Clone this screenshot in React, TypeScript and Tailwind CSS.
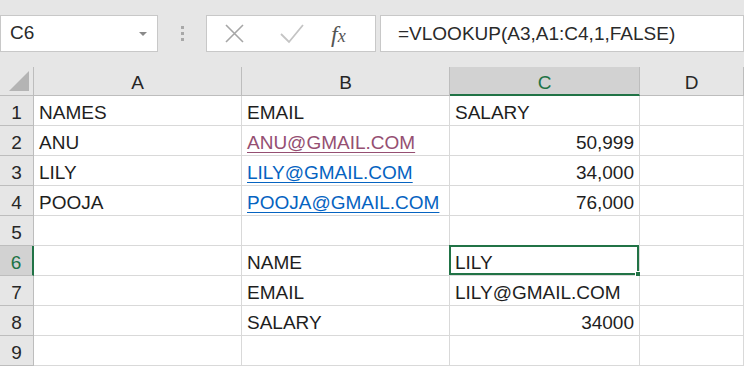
import React from "react";

const font = { fontFamily: '"Liberation Sans", Arial, sans-serif' };

const cols = ["A", "B", "C", "D"];

type Cell = { text?: string; align?: "left" | "right"; color?: string; underline?: boolean };

const rows: Cell[][] = [
  [{ text: "NAMES" }, { text: "EMAIL" }, { text: "SALARY" }, {}],
  [{ text: "ANU" }, { text: "ANU@GMAIL.COM", color: "text-[#954f72]", underline: true }, { text: "50,999", align: "right" }, {}],
  [{ text: "LILY" }, { text: "LILY@GMAIL.COM", color: "text-[#0563c1]", underline: true }, { text: "34,000", align: "right" }, {}],
  [{ text: "POOJA" }, { text: "POOJA@GMAIL.COM", color: "text-[#0563c1]", underline: true }, { text: "76,000", align: "right" }, {}],
  [{}, {}, {}, {}],
  [{}, { text: "NAME" }, { text: "LILY" }, {}],
  [{}, { text: "EMAIL" }, { text: "LILY@GMAIL.COM" }, {}],
  [{}, { text: "SALARY" }, { text: "34000", align: "right" }, {}],
  [{}, {}, {}, {}],
];

export default function App() {
  return (
    <div className="w-[744px] h-[371px] overflow-hidden bg-white text-[#1e1e1e]" style={font}>
      {/* formula bar */}
      <div className="h-[67px] bg-[#e6e6e6] flex items-start pt-[15px]">
        <div className="w-[158px] h-[37px] bg-white border border-[#c8c8c8] flex items-center justify-between pl-[9px] pr-[10px]">
          <span className="text-[19px] text-[#2a2a2a]">C6</span>
          <span className="w-0 h-0 border-l-[4px] border-r-[4px] border-t-[4px] border-l-transparent border-r-transparent border-t-[#8a8a8a]" />
        </div>
        <div className="w-[48px] h-[37px] flex flex-col items-center justify-center gap-[3px]">
          <span className="w-[3px] h-[3px] bg-[#a8a8a8]" />
          <span className="w-[3px] h-[3px] bg-[#a8a8a8]" />
          <span className="w-[3px] h-[3px] bg-[#a8a8a8]" />
        </div>
        <div className="w-[170px] h-[37px] bg-white border border-[#c8c8c8] flex items-center">
          <svg width="60" height="37" viewBox="0 0 60 37">
            <path d="M19 10 L36 27 M36 10 L19 27" stroke="#a6a6a6" strokeWidth="1.6" fill="none" />
          </svg>
          <svg width="52" height="37" viewBox="0 0 52 37">
            <path d="M14 19 L22 27 L36 10" stroke="#c4c4c4" strokeWidth="1.8" fill="none" />
          </svg>
          <span className="ml-[12px] text-[24px] italic text-[#555] leading-none" style={{ fontFamily: '"Liberation Serif", serif' }}>
            f<span className="text-[18px]">x</span>
          </span>
        </div>
        <div className="ml-[4px] flex-1 h-[37px] bg-white border border-[#c8c8c8] flex items-center pl-[17px] pt-[1px]">
          <span className="text-[19px] text-[#2a2a2a]">=VLOOKUP(A3,A1:C4,1,FALSE)</span>
        </div>
      </div>

      {/* grid */}
      <div className="grid grid-cols-[34px_208px_208px_190px_1fr] auto-rows-[30px] grid-rows-[29px]">
        <div className="bg-[#e6e6e6] border-r border-b border-[#bdbdbd] relative">
          <span className="absolute right-[4px] bottom-[4px] w-0 h-0" style={{ borderBottom: "20px solid #b4b4b4", borderLeft: "20px solid transparent" }} />
        </div>
        {cols.map((c) => (
          <div
            key={c}
            className={
              c === "C"
                ? "bg-[#d2d2d2] border-r border-[#bdbdbd] border-b-2 border-b-[#217346] flex items-center justify-center pt-[5px] text-[19px] text-[#217346]"
                : "bg-[#e6e6e6] border-r border-b border-[#bdbdbd] flex items-center justify-center pt-[5px] text-[19px] text-[#262626]"
            }
          >
            {c}
          </div>
        ))}
        {rows.map((row, i) => (
          <React.Fragment key={i}>
            <div
              className={
                i === 5
                  ? "bg-[#d2d2d2] border-b border-[#bdbdbd] border-r-2 border-r-[#217346] flex items-center justify-center pt-[5px] text-[19px] text-[#217346]"
                  : "bg-[#e6e6e6] border-r border-b border-[#bdbdbd] flex items-center justify-center pt-[5px] text-[19px] text-[#262626]"
              }
            >
              {i + 1}
            </div>
            {row.map((cell, j) => {
              const selected = i === 5 && j === 2;
              return (
                <div
                  key={j}
                  className={`relative border-r border-b border-[#d9d9d9] flex items-center px-[5px] pt-[5px] text-[19px] whitespace-nowrap ${
                    cell.align === "right" ? "justify-end" : "justify-start"
                  } ${cell.color ?? ""}`}
                >
                  <span className={cell.underline ? "underline underline-offset-[3px] decoration-1" : ""}>{cell.text}</span>
                  {selected && (
                    <div className="absolute -left-[1px] -top-[1px] right-0 bottom-0 border-2 border-[#217346]">
                      <span className="absolute -right-[4px] -bottom-[4px] w-[6px] h-[6px] bg-[#217346] border border-white" />
                    </div>
                  )}
                </div>
              );
            })}
          </React.Fragment>
        ))}
      </div>
    </div>
  );
}
